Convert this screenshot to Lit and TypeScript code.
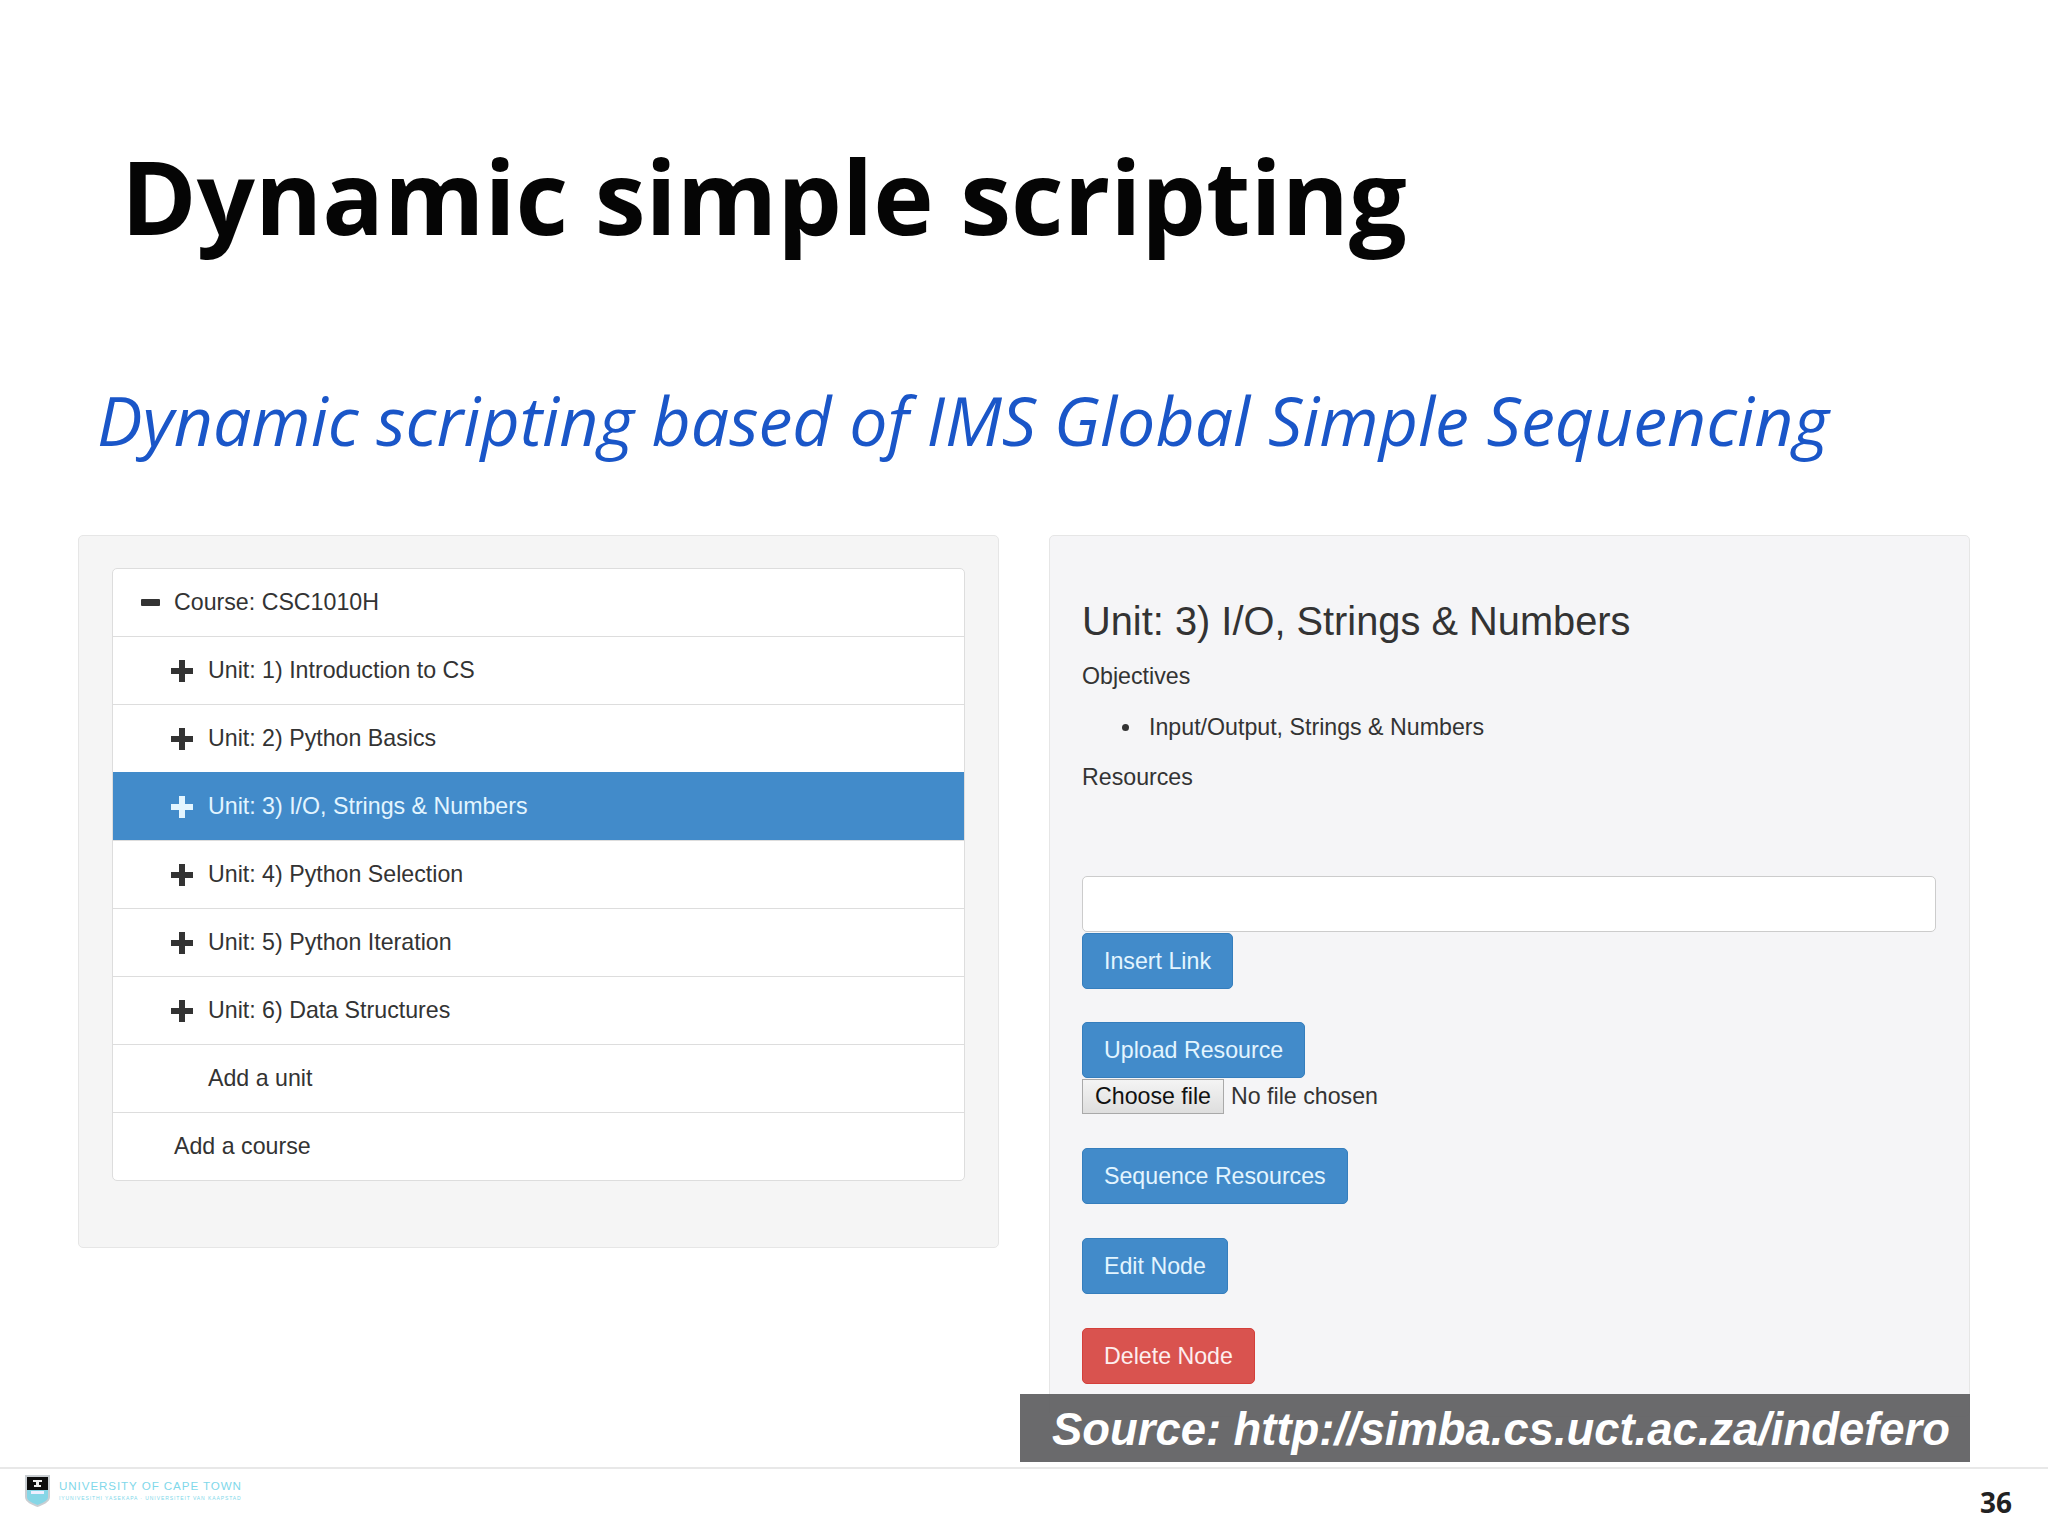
import { LitElement, html, css, svg } from "lit";
import { customElement } from "lit/decorators.js";

const plus = svg`<svg class="ico" viewBox="0 0 22 22"><path d="M8 0h6v8h8v6h-8v8H8v-8H0V8h8z" fill="currentColor"/></svg>`;
const minus = svg`<svg class="ico minus" viewBox="0 0 19 8"><rect x="0" y="0" width="19" height="7" rx="1" fill="currentColor"/></svg>`;

@customElement("app-root")
export class AppRoot extends LitElement {
  static styles = css`
    :host { display: block; width: 2048px; height: 1536px; position: relative; overflow: hidden; background: #fff; color: #333; font-family: "Liberation Sans", Arial, sans-serif; }
    .slide { display: flex; flex-direction: column; height: 1536px; }
    h1 { margin: 0; padding: 132px 0 0 121px; height: 128px; flex: none; font: 700 102.3px/128px "Open Sans", sans-serif; color: #050505; white-space: nowrap; }
    .sub { margin: 0; padding: 112px 0 0 97px; height: 96px; flex: none; font: italic 400 68px/96px "Open Sans", sans-serif; color: #1a56c8; white-space: nowrap; }
    .panels { display: flex; flex: none; align-items: flex-start; gap: 50px; margin: 0 0 0 78px; padding-top: 67px; height: 930px; box-sizing: content-box; }
    .well { box-sizing: border-box; width: 921px; flex: none; background: #f5f5f5; border: 1px solid #e6e6e6; border-radius: 5px; }
    .well.left { height: 713px; padding: 32px 33px; }
    .well.right { height: 882px; padding: 57px 32px 0; background: #f5f5f7; display: flex; flex-direction: column; align-items: flex-start; }
    .list { border: 1px solid #ddd; border-radius: 5px; background: #fff; overflow: hidden; }
    .row { box-sizing: border-box; height: 68px; display: flex; align-items: center; font-size: 23.2px; border-top: 1px solid #ddd; padding-left: 95px; color: #333; }
    .row:first-child { border-top: 0; height: 67px; }
    .row.course { padding-left: 61px; }
    .row.active { background: #428bca; color: #e3f5ff; border-color: #428bca; }
    .row .ico { width: 22px; height: 22px; margin-left: -37px; margin-right: 15px; flex: none; }
    .row .ico.minus { width: 19px; height: 8px; margin-left: -33px; margin-right: 14px; }
    h2 { margin: 0 0 10px; font: 400 39.8px/56px "Liberation Sans", sans-serif; color: #333; }
    p { margin: 0; font-size: 23.2px; line-height: 34px; }
    ul { margin: 17px 0 16px; padding: 0; list-style: none; font-size: 23.2px; line-height: 34px; display: flex; align-items: center; }
    .dot { width: 7px; height: 7px; border-radius: 50%; background: #333; margin: 0 20px 0 40px; }
    .input { box-sizing: border-box; width: 854px; height: 56px; background: #fff; border: 1px solid #ccc; border-radius: 5px; margin-top: 82px; }
    .btn { box-sizing: border-box; height: 56px; display: flex; align-items: center; padding: 0 21px; background: #428bca; border: 1px solid #357ebd; border-radius: 5px; color: #e3f5ff; font-size: 23.2px; margin-top: 34px; white-space: nowrap; }
    .btn.tight { margin-top: 1px; }
    .btn.upload { margin-top: 33px; }
    .btn.danger { background: #d9534f; border-color: #d43f3a; color: #fdeeee; }
    .file { display: flex; align-items: center; margin-top: 1px; font-size: 23.2px; }
    .choose { box-sizing: border-box; width: 142px; height: 35px; display: flex; align-items: center; justify-content: center; border: 1px solid #a9a9a9; background: linear-gradient(#f4f4f4, #dedede); color: #111; margin-right: 7px; }
    .source { position: absolute; left: 1020px; top: 1394px; width: 950px; height: 68px; box-sizing: border-box; padding-left: 32px; background: rgba(100,100,102,.96); color: #fff; font: italic 700 45.4px/71px "Liberation Sans", sans-serif; white-space: nowrap; }
    footer { border-top: 2px solid #e8e8e8; margin-top: 2px; flex: 1; display: flex; justify-content: space-between; padding: 6px 36px 0 25px; }
    .logo { display: flex; gap: 9px; align-items: flex-start; }
    .shield { width: 25px; height: 32px; flex: none; }
    .uct { color: #7fd8ea; font: 400 11.6px/14px "Liberation Sans", sans-serif; letter-spacing: .92px; white-space: nowrap; padding-top: 4px; }
    .uct small { display: block; font-size: 5px; line-height: 6px; letter-spacing: .92px; margin-top: 2px; }
    .num { font: 700 28px/38px "Open Sans", sans-serif; color: #222; margin-top: 8px; }
  `;

  render() {
    const units = ["Unit: 1) Introduction to CS", "Unit: 2) Python Basics", "Unit: 3) I/O, Strings & Numbers", "Unit: 4) Python Selection", "Unit: 5) Python Iteration", "Unit: 6) Data Structures"];
    return html`
      <div class="slide">
        <h1>Dynamic simple scripting</h1>
        <div class="sub">Dynamic scripting based of IMS Global Simple Sequencing</div>
        <div class="panels">
          <div class="well left">
            <div class="list">
              <div class="row course">${minus}Course: CSC1010H</div>
              ${units.map((u, i) => html`<div class="row ${i === 2 ? "active" : ""}">${plus}${u}</div>`)}
              <div class="row">Add a unit</div>
              <div class="row course">Add a course</div>
            </div>
          </div>
          <div class="well right">
            <h2>Unit: 3) I/O, Strings &amp; Numbers</h2>
            <p>Objectives</p>
            <ul><span class="dot"></span><li>Input/Output, Strings &amp; Numbers</li></ul>
            <p>Resources</p>
            <div class="input"></div>
            <div class="btn tight">Insert Link</div>
            <div class="btn upload">Upload Resource</div>
            <div class="file"><span class="choose">Choose file</span>No file chosen</div>
            <div class="btn">Sequence Resources</div>
            <div class="btn">Edit Node</div>
            <div class="btn danger">Delete Node</div>
          </div>
        </div>
        <footer>
          <div class="logo">
            <svg class="shield" viewBox="0 0 25 32">
              <path d="M0 0h25v22c0 5-7 8-12.500 10C7 30 0 27 0 22z" fill="#c9ced2"/>
              <path d="M2 2h21v13H2z" fill="#0d0d0d"/>
              <path d="M2 15h21v7c0 4-6 6-10.500 8C8 28 2 26 2 22z" fill="#86d6e6"/>
              <path d="M8 5h9v2h-3v3h2v2H9v-2h2V7H8z" fill="#eee"/>
              <path d="M6 16h13v3H6z" fill="#eef"/>
            </svg>
            <div class="uct">UNIVERSITY OF CAPE TOWN<small>IYUNIVESITHI YASEKAPA · UNIVERSITEIT VAN KAAPSTAD</small></div>
          </div>
          <div class="num">36</div>
        </footer>
      </div>
      <div class="source">Source: http://simba.cs.uct.ac.za/indefero</div>
    `;
  }
}
